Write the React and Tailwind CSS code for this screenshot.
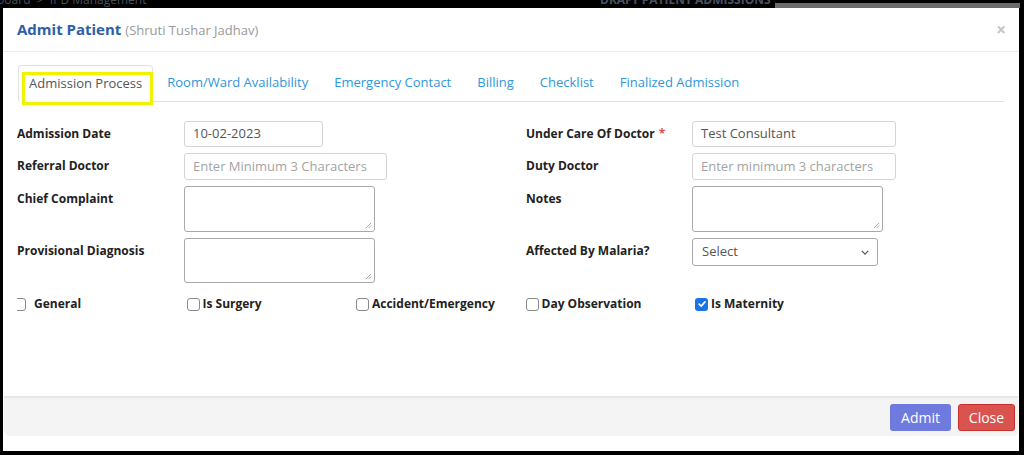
import React from "react";

const font = { fontFamily: "'Open Sans', 'Noto Sans', Arial, sans-serif" };

function Box({ checked }) {
  if (checked) {
    return (
      <span className="inline-flex h-[13px] w-[13px] shrink-0 items-center justify-center rounded-[3px] bg-[#1a73e8]">
        <svg viewBox="0 0 12 12" className="h-[10px] w-[10px]" fill="none" stroke="white" strokeWidth="2" strokeLinecap="round" strokeLinejoin="round">
          <path d="M2.5 6.2 5 8.6 9.6 3.4" />
        </svg>
      </span>
    );
  }
  return <span className="inline-block h-[13px] w-[13px] shrink-0 rounded-[3px] border border-[#8a8a8a] bg-white" />;
}

function Check({ label, checked, clipped }) {
  return (
    <div className="flex w-[169.5px] items-center">
      {clipped ? (
        <span className="flex w-[9px] overflow-hidden">
          <span className="-ml-[4px] flex">
            <Box />
          </span>
        </span>
      ) : (
        <Box checked={checked} />
      )}
      <span className={`${clipped ? "ml-[8px]" : "ml-[3px]"} text-[12px] font-bold text-[#222]`}>{label}</span>
    </div>
  );
}

function Label({ children, req }) {
  return (
    <div className="pt-[5px] text-[12px] font-bold leading-[16px] text-[#222]">
      {children}
      {req && <span className="ml-[4px] text-[#d9534f]">*</span>}
    </div>
  );
}

function Input({ w, value, placeholder, h = "h-[26px]" }) {
  return (
    <div className={`flex ${h} ${w} items-center rounded-[3px] border border-[#d4d4d4] px-[8px] text-[13px]`}>
      {value ? <span className="text-[#555]">{value}</span> : <span className="text-[#a3a3a3]">{placeholder}</span>}
    </div>
  );
}

function Area({ w, h }) {
  return (
    <div className={`relative ${w} ${h} rounded-[3px] border border-[#a9a9a9]`}>
      <svg viewBox="0 0 8 8" className="absolute bottom-[2px] right-[2px] h-[7px] w-[7px]" stroke="#9a9a9a" strokeWidth="1">
        <path d="M7 1 1 7M7 4 4 7" />
      </svg>
    </div>
  );
}

export default function App() {
  const tabs = ["Room/Ward Availability", "Emergency Contact", "Billing", "Checklist", "Finalized Admission"];
  return (
    <div style={font} className="flex h-[455px] w-[1024px] flex-col overflow-hidden bg-black">
      {/* page behind the backdrop, mostly hidden */}
      <div className="flex h-[8px] shrink-0 overflow-hidden">
        <div className="-mt-[7px] flex w-[600px] pl-[0px] text-[12px] leading-[14px] text-[#4a5260]">
          <span className="-ml-[3px]">board&nbsp;&nbsp;&gt;&nbsp;&nbsp;IPD Management</span>
        </div>
        <div className="-mt-[7px] w-[175px] text-[12px] font-bold leading-[14px] text-[#4a5260]">DRAFT PATIENT ADMISSIONS</div>
        <div className="mt-[3px] h-[5px] w-[245px] bg-[#6b6b6b]" />
      </div>

      <div className="ml-[3px] mr-[5px] flex h-[443px] flex-col bg-white">
        {/* header */}
        <div className="flex h-[44px] shrink-0 items-center justify-between border-b border-[#ececec] pl-[14px] pr-[13px]">
          <div className="flex items-baseline">
            <span className="text-[15px] font-bold text-[#2d5fa6]">Admit Patient</span>
            <span className="ml-[4px] text-[13px] text-[#999]">(Shruti Tushar Jadhav)</span>
          </div>
          <span className="text-[17px] font-bold leading-none text-[#c4c4c4]">×</span>
        </div>

        {/* tabs */}
        <div className="mx-[15px] mt-[13px] flex h-[37px] shrink-0 items-end border-b border-[#e2e2e2]">
          <div className="relative -mb-px flex h-[37px] items-center rounded-t-[4px] border border-b-white border-[#e2e2e2] bg-white px-[10px] text-[13px] text-[#555]">
            Admission Process
            <div className="absolute left-[3px] top-[6px] h-[33px] w-[131px] border-[3px] border-[#f2f200]" />
          </div>
          {tabs.map((t) => (
            <div key={t} className="ml-[2px] flex h-[37px] items-center px-[12px] text-[13px] text-[#2e97dc]">
              {t}
            </div>
          ))}
        </div>

        {/* form */}
        <div className="ml-[14px] mt-[19px] grid grid-cols-[167px_342px_166px_1fr] gap-y-[6px]">
          <Label>Admission Date</Label>
          <Input w="w-[139px]" value="10-02-2023" />
          <Label req>Under Care Of Doctor</Label>
          <Input w="w-[204px]" value="Test Consultant" />

          <Label>Referral Doctor</Label>
          <Input w="w-[203px]" h="h-[27px]" placeholder="Enter Minimum 3 Characters" />
          <Label>Duty Doctor</Label>
          <Input w="w-[204px]" h="h-[27px]" placeholder="Enter minimum 3 characters" />

          <Label>Chief Complaint</Label>
          <Area w="w-[191px]" h="h-[46px]" />
          <Label>Notes</Label>
          <Area w="w-[191px]" h="h-[46px]" />

          <Label>Provisional Diagnosis</Label>
          <Area w="w-[191px]" h="h-[45px]" />
          <Label>Affected By Malaria?</Label>
          <div className="flex h-[28px] w-[186px] items-center justify-between rounded-[3px] border border-[#a9a9a9] pl-[9px] pr-[8px] text-[13px] text-[#555]">
            <span>Select</span>
            <svg viewBox="0 0 10 6" className="h-[5px] w-[8px]" fill="none" stroke="#555" strokeWidth="1.6">
              <path d="M1 1l4 4 4-4" />
            </svg>
          </div>
        </div>

        <div className="ml-[14px] mt-[13px] flex h-[16px]">
          <Check label="General" clipped />
          <Check label="Is Surgery" />
          <Check label="Accident/Emergency" />
          <Check label="Day Observation" />
          <Check label="Is Maternity" checked />
        </div>

        <div className="flex-1" />

        {/* footer */}
        <div className="mx-[1px] mb-[15px] flex h-[40px] shrink-0 items-center justify-end gap-[7px] rounded-b-[5px] border-t-2 border-[#e6e6e6] bg-[#f4f4f4] pr-[3px]">
          <button className="h-[27px] w-[61px] rounded-[3px] bg-[#6f7ade] text-[14px] text-white">Admit</button>
          <button className="h-[27px] w-[57px] rounded-[3px] border border-[#c9302c] bg-[#d9534f] text-[14px] text-white">Close</button>
        </div>
      </div>
    </div>
  );
}
